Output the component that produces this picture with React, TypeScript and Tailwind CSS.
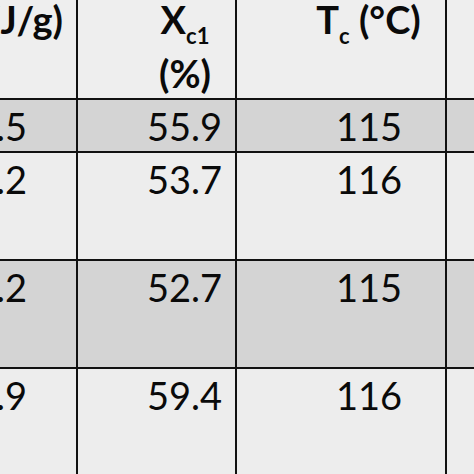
import React from "react";

const font = { fontFamily: "Lato, 'Noto Sans', sans-serif" };

function DataRow({
  a,
  b,
  c,
  gray,
}: {
  a: string;
  b: string;
  c: string;
  gray: boolean;
}) {
  const bg = gray ? "bg-[#d4d4d4]" : "bg-[#ededed]";
  return (
    <>
      <div className={`${bg} overflow-hidden flex justify-end pr-[49px] pt-[7px] text-[38px] leading-none whitespace-nowrap`}>
        {a}
      </div>
      <div className={`${bg} overflow-hidden flex justify-end pr-[13px] pt-[7px] text-[38px] leading-none whitespace-nowrap`}>
        {b}
      </div>
      <div className={`${bg} overflow-hidden flex justify-end pr-[43px] pt-[7px] text-[38px] leading-none whitespace-nowrap`}>
        {c}
      </div>
      <div className={`${bg}`} />
    </>
  );
}

export default function App() {
  return (
    <div
      className="w-[474px] h-[474px] overflow-hidden bg-[#111111] text-[#0a0a0a]"
      style={font}
    >
      <div className="grid grid-cols-[76px_157px_208px_40px] grid-rows-[98px_51px_106px_106px_120px] gap-[2px] w-[489px]">
        {/* header */}
        <div className="bg-[#eeeeee] overflow-hidden flex justify-end pr-[13px] text-[38px] font-bold leading-none whitespace-nowrap">
          (J/g)
        </div>
        <div className="bg-[#eeeeee] overflow-hidden pl-[57px] text-center text-[38px] font-bold leading-none whitespace-nowrap">
          <div>
            X<span className="relative top-[10px] text-[22px]">c1</span>
          </div>
          <div className="mt-[16px]">(%)</div>
        </div>
        <div className="bg-[#eeeeee] overflow-hidden pl-[55px] text-center text-[38px] font-bold leading-none whitespace-nowrap">
          T<span className="relative top-[10px] text-[22px]">c</span> (°C)
        </div>
        <div className="bg-[#eeeeee]" />

        <DataRow a="47.5" b="55.9" c="115" gray />
        <DataRow a="46.2" b="53.7" c="116" gray={false} />
        <DataRow a="45.2" b="52.7" c="115" gray />
        <DataRow a="50.9" b="59.4" c="116" gray={false} />
      </div>
    </div>
  );
}
